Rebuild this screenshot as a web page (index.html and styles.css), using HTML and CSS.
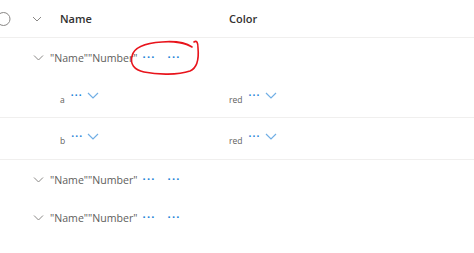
FILE: index.html
```html
<!DOCTYPE html>
<html>
<head>
<meta charset="utf-8">
<link rel="stylesheet" href="styles.css">
</head>
<body>
<div class="list">
  <div class="row header">
    <div class="check">
      <svg width="24" height="38" viewBox="0 0 24 38"><circle cx="3.5" cy="19" r="6.5" fill="none" stroke="#8a8886" stroke-width="1"/></svg>
    </div>
    <div class="toggle">
      <svg width="10" height="6" viewBox="0 0 10 6"><path d="M1 1 L5 5 L9 1" fill="none" stroke="#8a8886" stroke-width="1"/></svg>
    </div>
    <div class="col-name head-text">Name</div>
    <div class="col-color head-text">Color</div>
  </div>

  <div class="row group">
    <div class="check"></div>
    <div class="group-toggle">
      <svg width="11" height="6" viewBox="0 0 11 6"><path d="M1 0.5 L5.5 5 L10 0.5" fill="none" stroke="#8a8886" stroke-width="1"/></svg>
    </div>
    <div class="group-title">"Name""Number"</div>
    <span class="dots first">···</span>
    <span class="dots second">···</span>
  </div>

  <div class="row item">
    <div class="check"></div>
    <div class="toggle"></div>
    <div class="col-name"><span class="cell-text">a</span><span class="dots small">···</span><svg class="chev" width="12" height="7" viewBox="0 0 12 7"><path d="M1 1 L6 6 L11 1" fill="none" stroke="#71afe5" stroke-width="1.2"/></svg></div>
    <div class="col-color"><span class="cell-text">red</span><span class="dots small">···</span><svg class="chev" width="12" height="7" viewBox="0 0 12 7"><path d="M1 1 L6 6 L11 1" fill="none" stroke="#71afe5" stroke-width="1.2"/></svg></div>
  </div>

  <div class="row item tall">
    <div class="check"></div>
    <div class="toggle"></div>
    <div class="col-name"><span class="cell-text">b</span><span class="dots small">···</span><svg class="chev" width="12" height="7" viewBox="0 0 12 7"><path d="M1 1 L6 6 L11 1" fill="none" stroke="#71afe5" stroke-width="1.2"/></svg></div>
    <div class="col-color"><span class="cell-text">red</span><span class="dots small">···</span><svg class="chev" width="12" height="7" viewBox="0 0 12 7"><path d="M1 1 L6 6 L11 1" fill="none" stroke="#71afe5" stroke-width="1.2"/></svg></div>
  </div>

  <div class="row group">
    <div class="check"></div>
    <div class="group-toggle">
      <svg width="11" height="6" viewBox="0 0 11 6"><path d="M1 0.5 L5.5 5 L10 0.5" fill="none" stroke="#8a8886" stroke-width="1"/></svg>
    </div>
    <div class="group-title">"Name""Number"</div>
    <span class="dots first">···</span>
    <span class="dots second">···</span>
  </div>

  <div class="row group short">
    <div class="check"></div>
    <div class="group-toggle">
      <svg width="11" height="6" viewBox="0 0 11 6"><path d="M1 0.5 L5.5 5 L10 0.5" fill="none" stroke="#8a8886" stroke-width="1"/></svg>
    </div>
    <div class="group-title">"Name""Number"</div>
    <span class="dots first">···</span>
    <span class="dots second">···</span>
  </div>
</div>

<svg class="annotation" width="80" height="40" viewBox="0 0 80 40">
  <path d="M66 3 C69 1 70 4 70 9 C71 20 69 29 62 32 C50 36 30 36 16 33 C6 31 2 25 4 17 C6 8 18 4 34 3 C46 2 58 4 64 8" fill="none" stroke="#e8141c" stroke-width="1.6" stroke-linecap="round"/>
</svg>
</body>
</html>
```
FILE: styles.css
```css
html, body {
  margin: 0;
  padding: 0;
  background: #ffffff;
}
body {
  font-family: "Open Sans", "Noto Sans", sans-serif;
  color: #605e5c;
  position: relative;
  width: 474px;
  height: 253px;
  overflow: hidden;
}
.list {
  display: flex;
  flex-direction: column;
}
.row {
  display: flex;
  align-items: center;
}
.header {
  height: 37px;
  border-bottom: 1px solid #f0efee;
}
.group {
  height: 40px;
}
.group.short {
  height: 36px;
}
.item {
  height: 39px;
  border-bottom: 1px solid #f0efee;
}
.item.tall {
  height: 41px;
}
.check {
  width: 24px;
  height: 38px;
  flex: none;
  display: flex;
  align-items: center;
}
.check svg {
  display: block;
}
.toggle {
  width: 36px;
  flex: none;
  display: flex;
  align-items: center;
  padding-left: 8px;
  box-sizing: border-box;
}
.toggle svg {
  display: block;
}
.head-text {
  font-size: 11px;
  font-weight: 600;
  color: #323130;
}
.col-name {
  width: 169px;
  flex: none;
  display: flex;
  align-items: center;
}
.col-color {
  flex: 1;
  display: flex;
  align-items: center;
}
.group-toggle {
  width: 26px;
  flex: none;
  padding-left: 9px;
  box-sizing: border-box;
  display: flex;
  align-items: center;
}
.group-toggle svg {
  display: block;
}
.group-title {
  font-size: 10.6px;
  color: #605e5c;
  white-space: nowrap;
}
.dots {
  color: #1a7fd6;
  font-size: 11px;
  font-weight: 700;
  letter-spacing: 1.2px;
  line-height: 1;
  position: relative;
  top: -2px;
}
.dots.first {
  margin-left: 5px;
}
.dots.second {
  margin-left: 12px;
}
.dots.small {
  font-size: 10px;
  margin-left: 6px;
  top: -3px;
}
.cell-text {
  font-size: 8.5px;
  color: #605e5c;
  position: relative;
  top: 2px;
}
.chev {
  display: block;
  margin-left: 4px;
  position: relative;
  top: -2px;
}
.annotation {
  position: absolute;
  left: 128px;
  top: 39px;
}
```
